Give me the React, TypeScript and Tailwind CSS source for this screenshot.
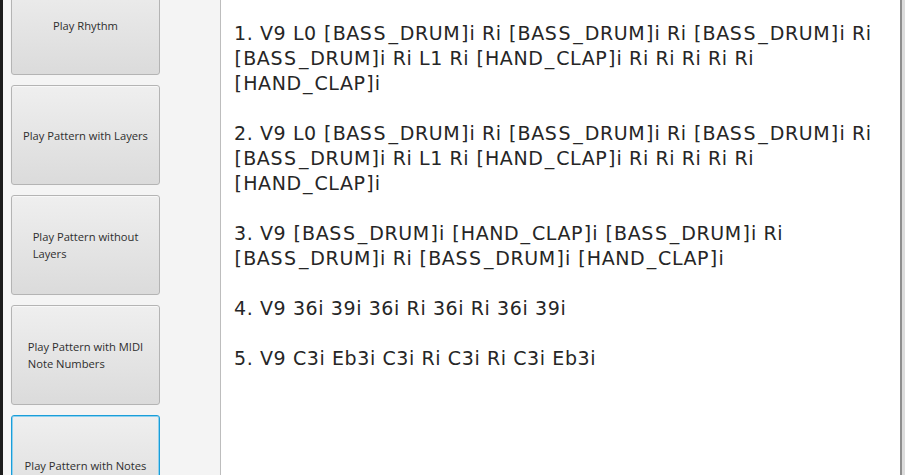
import React from "react";

const lines: string[] = [
  "1. V9 L0 [BASS_DRUM]i Ri [BASS_DRUM]i Ri [BASS_DRUM]i Ri",
  "[BASS_DRUM]i Ri L1 Ri [HAND_CLAP]i Ri Ri Ri Ri Ri",
  "[HAND_CLAP]i",
  "",
  "2. V9 L0 [BASS_DRUM]i Ri [BASS_DRUM]i Ri [BASS_DRUM]i Ri",
  "[BASS_DRUM]i Ri L1 Ri [HAND_CLAP]i Ri Ri Ri Ri Ri",
  "[HAND_CLAP]i",
  "",
  "3. V9 [BASS_DRUM]i [HAND_CLAP]i [BASS_DRUM]i Ri",
  "[BASS_DRUM]i Ri [BASS_DRUM]i [HAND_CLAP]i",
  "",
  "4. V9 36i 39i 36i Ri 36i Ri 36i 39i",
  "",
  "5. V9 C3i Eb3i C3i Ri C3i Ri C3i Eb3i",
];

// Verdana-like glyph widths on top of DejaVu Sans
function Line({ text }: { text: string }) {
  const parts: React.ReactNode[] = [];
  let buf = "";
  const flush = (k: number) => {
    if (buf) {
      parts.push(<React.Fragment key={"t" + k}>{buf}</React.Fragment>);
      buf = "";
    }
  };
  for (let i = 0; i < text.length; i++) {
    const c = text[i];
    if (c === "[" || c === "]") {
      flush(i);
      parts.push(
        <span key={i} className="px-[0.6px]">
          {c}
        </span>
      );
    } else if (c === "_") {
      flush(i);
      parts.push(
        <span key={i} className="px-[1.3px]">
          {c}
        </span>
      );
    } else if (c === "S") {
      flush(i);
      parts.push(
        <span key={i} className="pr-[0.95px]">
          {c}
        </span>
      );
    } else {
      buf += c;
    }
  }
  flush(text.length);
  return <div className="h-[25px] whitespace-nowrap">{parts}</div>;
}

function Btn({ children, focused }: { children: React.ReactNode; focused?: boolean }) {
  return (
    <div
      className={
        "w-[149px] h-[100px] shrink-0 rounded-[3px] border flex items-center justify-center bg-gradient-to-b from-[#efefef] to-[#dbdbdb] text-[11.2px] leading-[17px] text-[#2e2e2e] " +
        (focused
          ? "border-[#1a9ed9] shadow-[inset_0_0_0_1px_#8fd0ee]"
          : "border-[#b4b4b4] shadow-[inset_0_1px_0_#f8f8f8]")
      }
      style={{ fontFamily: '"Open Sans", "Noto Sans", sans-serif' }}
    >
      <span className="inline-block text-left whitespace-nowrap">{children}</span>
    </div>
  );
}

export default function App() {
  return (
    <div className="w-[905px] h-[475px] flex overflow-hidden bg-white">
      <div className="w-[3px] shrink-0 bg-[#1c1c1c]" />
      <div className="w-[218px] shrink-0 bg-[#f4f4f4] border-r border-[#bdbdbd] overflow-hidden">
        <div className="flex flex-col gap-[10px] pl-[8px] -mt-[25px]">
          <Btn>Play Rhythm</Btn>
          <Btn>Play Pattern with Layers</Btn>
          <Btn>
            Play Pattern without
            <br />
            Layers
          </Btn>
          <Btn>
            Play Pattern with MIDI
            <br />
            Note Numbers
          </Btn>
          <Btn focused>Play Pattern with Notes</Btn>
        </div>
      </div>
      <div
        className="flex-1 bg-white pl-[13px] pt-[21px] text-[19px] leading-[25px] text-[#262626] tracking-[0.6px]"
        style={{ fontFamily: '"DejaVu Sans", Verdana, sans-serif' }}
      >
        {lines.map((l, i) => (
          <Line key={i} text={l} />
        ))}
      </div>
      <div className="w-[2px] shrink-0 bg-[#8e8e8e]" />
      <div className="w-[3px] shrink-0 bg-[#dcdcdc]" />
    </div>
  );
}
